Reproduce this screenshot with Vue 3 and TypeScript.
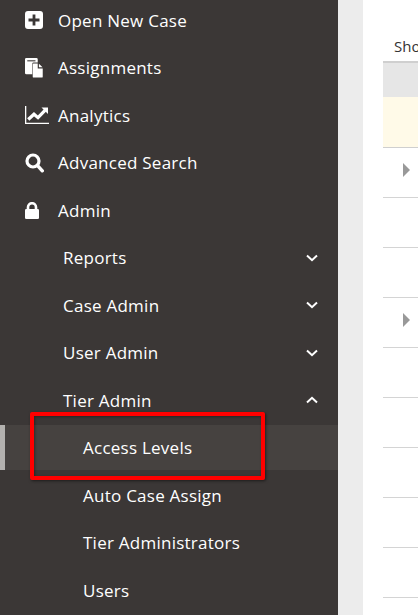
<script setup lang="ts">
interface Item { label: string; level: number; icon?: string; chevron?: 'down' | 'up'; active?: boolean }
const items: Item[] = [
  { label: 'Open New Case', level: 0, icon: 'plus' },
  { label: 'Assignments', level: 0, icon: 'paste' },
  { label: 'Analytics', level: 0, icon: 'chart' },
  { label: 'Advanced Search', level: 0, icon: 'search' },
  { label: 'Admin', level: 0, icon: 'lock' },
  { label: 'Reports', level: 1, chevron: 'down' },
  { label: 'Case Admin', level: 1, chevron: 'down' },
  { label: 'User Admin', level: 1, chevron: 'down' },
  { label: 'Tier Admin', level: 1, chevron: 'up' },
  { label: 'Access Levels', level: 2, active: true },
  { label: 'Auto Case Assign', level: 2 },
  { label: 'Tier Administrators', level: 2 },
  { label: 'Users', level: 2 },
]
const rows = [
  { kind: 'head', arrow: false },
  { kind: 'warn', arrow: false },
  { kind: 'row', arrow: true },
  { kind: 'row', arrow: false },
  { kind: 'row', arrow: false },
  { kind: 'row', arrow: true },
  { kind: 'row', arrow: false },
  { kind: 'row', arrow: false },
  { kind: 'row', arrow: false },
  { kind: 'row', arrow: false },
  { kind: 'row', arrow: false },
]
</script>

<template>
  <div class="page">
    <nav class="sidebar">
      <a
        v-for="item in items"
        :key="item.label"
        class="item"
        :class="['level' + item.level, { active: item.active }]"
      >
        <span v-if="item.icon" class="icon">
          <svg v-if="item.icon === 'plus'" width="18" height="18" viewBox="0 0 18 18">
            <path fill="#fff" fill-rule="evenodd" d="M3 0h12a3 3 0 0 1 3 3v12a3 3 0 0 1-3 3H3a3 3 0 0 1-3-3V3a3 3 0 0 1 3-3zM7.600 3.500v4.100H3.500v2.800h4.100v4.100h2.800v-4.100h4.100V7.600h-4.100V3.500z" />
          </svg>
          <svg v-else-if="item.icon === 'paste'" width="20" height="20" viewBox="0 0 22 22">
            <path fill="#fff" d="M1.500 0h11a1.500 1.500 0 0 1 1.500 1.500V5H9.500A1.500 1.500 0 0 0 8 6.500V18H1.500A1.500 1.500 0 0 1 0 16.500v-15A1.500 1.500 0 0 1 1.500 0z" />
            <path fill="#3b3736" d="M2.500 2.500h9v1.200h-9z" />
            <path fill="#fff" d="M9.500 6H14v5.500h5.500V20.500a1 1 0 0 1-1 1h-9a1 1 0 0 1-1-1V7a1 1 0 0 1 1-1zM15.300 6.300l4 4h-4z" />
          </svg>
          <svg v-else-if="item.icon === 'chart'" width="24" height="20" viewBox="0 0 24 20">
            <path fill="#fff" d="M0 1h1.300v16.700H24V19H0z" />
            <path fill="none" stroke="#fff" stroke-width="3.200" d="M3.200 14.500l5.800-5.300 4 3.400 7-7.300" />
            <path fill="#fff" d="M16.500 2.500h6.500V9z" />
          </svg>
          <svg v-else-if="item.icon === 'search'" width="19" height="20" viewBox="0 0 19 20">
            <circle cx="8" cy="8" r="6" fill="none" stroke="#fff" stroke-width="3.200" />
            <path stroke="#fff" stroke-width="3.400" stroke-linecap="round" d="M12.800 12.800l4.500 5" />
          </svg>
          <svg v-else width="14" height="17" viewBox="0 0 14 17">
            <path fill="none" stroke="#fff" stroke-width="2.600" d="M3 8V5.200a4 4 0 0 1 8 0V8" />
            <rect x="0" y="7" width="14" height="10" rx="1.300" fill="#fff" />
          </svg>
        </span>
        <span class="label">{{ item.label }}</span>
        <svg v-if="item.chevron" class="chevron" width="12" height="8" viewBox="0 0 12 8">
          <path
            fill="none"
            stroke="#fff"
            stroke-width="2"
            :d="item.chevron === 'down' ? 'M1 1.500l5 4.700 5-4.700' : 'M1 6.500l5-4.700 5 4.700'"
          />
        </svg>
      </a>
    </nav>
    <div class="gutter"></div>
    <main class="main">
      <div class="show">Show</div>
      <div class="table">
        <div v-for="(row, i) in rows" :key="i" class="row" :class="row.kind">
          <span v-if="row.arrow" class="arrow"></span>
        </div>
      </div>
    </main>
    <div class="highlight"></div>
  </div>
</template>

<style>
html, body { margin: 0; padding: 0; background: #fff; overflow: hidden; }
</style>

<style scoped>
.page {
  position: relative;
  display: flex;
  width: 418px;
  height: 615px;
  overflow: hidden;
  font-family: "Open Sans", "Liberation Sans", sans-serif;
}
.sidebar {
  flex: 0 0 338px;
  height: 616px;
  box-sizing: border-box;
  margin-top: -0.4px;
  background: #3b3736;
  overflow: hidden;
}
.item {
  display: flex;
  align-items: center;
  height: 47.5px;
  box-sizing: border-box;
  color: #fff;
  font-size: 17px;
  letter-spacing: 0.25px;
  position: relative;
  top: -3px;
}
.level0 { padding-left: 25px; }
.level1 { padding-left: 63px; }
.level2 { padding-left: 83px; }
.icon {
  flex: 0 0 33px;
  display: flex;
  align-items: center;
  height: 24px;
}
.label { flex: 1; white-space: nowrap; }
.chevron { margin-right: 20px; }
.active {
  background: #464240;
  box-shadow: inset 5px 0 0 #b3b1af;
  height: 45.5px;
  padding-top: 1px;
  margin-top: 0.5px;
  margin-bottom: 1.5px;
}
.gutter {
  flex: 0 0 25px;
  background: #ececec;
}
.main {
  flex: 1;
  min-width: 0;
  background: #fff;
  padding: 36px 0 0 20px;
  overflow: hidden;
}
.show {
  height: 25px;
  padding-left: 11px;
  font-size: 15px;
  line-height: 20px;
  color: #333;
  white-space: nowrap;
}
.table { width: 100%; }
.row {
  position: relative;
  box-sizing: border-box;
  height: 50px;
  border-bottom: 1px solid #d4d4d4;
}
.head {
  height: 36px;
  background: #e6e6e6;
  border-top: 2px solid #cfcfcf;
  border-bottom: 0;
}
.warn { height: 51px; background: #fffae8; border-bottom: 1px solid #cfcfcf; }
.arrow {
  position: absolute;
  left: 20px;
  top: 15px;
  width: 0;
  height: 0;
  border-left: 7px solid #999;
  border-top: 7px solid transparent;
  border-bottom: 7px solid transparent;
}
.highlight {
  position: absolute;
  left: 30px;
  top: 412px;
  width: 235px;
  height: 68px;
  box-sizing: border-box;
  border: 4px solid #f00;
  border-radius: 2px;
  box-shadow: 1px 1px 3px rgba(0, 0, 0, 0.5), inset 1px 1px 3px rgba(0, 0, 0, 0.35);
}
</style>
